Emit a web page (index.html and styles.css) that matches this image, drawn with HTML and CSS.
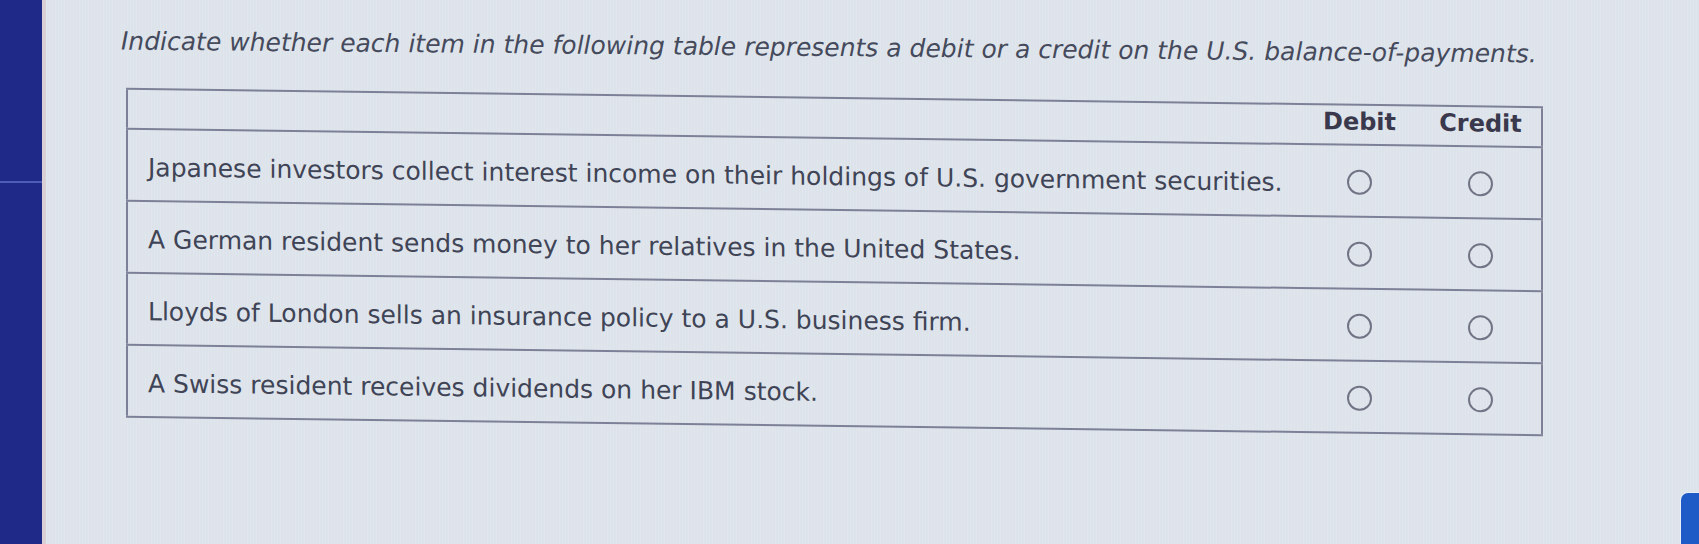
FILE: index.html
```html
<!DOCTYPE html>
<html lang="en">
<head>
<meta charset="utf-8">
<title>Balance of payments</title>
<link rel="stylesheet" href="styles.css">
</head>
<body>
<div class="page">
  <aside class="sidebar"><div class="sidebar-line"></div></aside>
  <main class="main">
    <p class="prompt">Indicate whether each item in the following table represents a debit or a credit on the U.S. balance-of-payments.</p>
    <table class="grid">
      <thead>
        <tr>
          <th class="item-head"></th>
          <th class="col-head">Debit</th>
          <th class="col-head">Credit</th>
        </tr>
      </thead>
      <tbody>
        <tr>
          <td class="item">Japanese investors collect interest income on their holdings of U.S. government securities.</td>
          <td class="choice"><span class="radio"></span></td>
          <td class="choice"><span class="radio"></span></td>
        </tr>
        <tr>
          <td class="item">A German resident sends money to her relatives in the United States.</td>
          <td class="choice"><span class="radio"></span></td>
          <td class="choice"><span class="radio"></span></td>
        </tr>
        <tr>
          <td class="item">Lloyds of London sells an insurance policy to a U.S. business firm.</td>
          <td class="choice"><span class="radio"></span></td>
          <td class="choice"><span class="radio"></span></td>
        </tr>
        <tr>
          <td class="item">A Swiss resident receives dividends on her IBM stock.</td>
          <td class="choice"><span class="radio"></span></td>
          <td class="choice"><span class="radio"></span></td>
        </tr>
      </tbody>
    </table>
    <div class="corner-button"></div>
  </main>
</div>
</body>
</html>
```
FILE: styles.css
```css
html, body {
  margin: 0;
  padding: 0;
  height: 100%;
}
body {
  font-family: "DejaVu Sans", Verdana, sans-serif;
  color: #3f4456;
  background: #dde3ea;
  overflow: hidden;
}
.page {
  display: flex;
  height: 544px;
}
.sidebar {
  width: 42px;
  flex: 0 0 42px;
  background: #1f2a88;
  border-right: 4px solid #d9d0d6;
}
.sidebar-line {
  margin-top: 181px;
  height: 2px;
  background: #4f5fb6;
}
.main {
  flex: 1;
  position: relative;
  background-color: #dde3ea;
  background-image: repeating-linear-gradient(90deg, rgba(255,255,255,0.12) 0 1px, rgba(0,0,0,0) 1px 3px);
  padding-top: 33px;
}
.prompt {
  width: max-content;
  margin: 0 0 0 75px;
  font-size: 25px;
  line-height: 30px;
  font-style: italic;
  color: #454a5c;
  white-space: nowrap;
  transform: skewY(0.52deg);
  transform-origin: 50% 50%;
}
.grid {
  margin: 34px 0 0 80px;
  width: 1417px;
  border-collapse: collapse;
  border: 2px solid #7c8197;
  transform: skewY(0.74deg);
  transform-origin: 50% 50%;
  font-size: 25px;
}
.grid th, .grid td {
  padding: 0;
  border-top: 2px solid #7c8197;
  border-bottom: 2px solid #7c8197;
}
.grid thead tr {
  height: 40px;
}
.grid .col-head {
  width: 121px;
  font-weight: bold;
  font-size: 24px;
  color: #3a384c;
  text-align: center;
  vertical-align: middle;
  padding-bottom: 6px;
}
.grid tbody tr {
  height: 72px;
}
.grid .item {
  text-align: left;
  padding-left: 20px;
  padding-top: 5px;
  vertical-align: middle;
  white-space: nowrap;
}
.grid .choice {
  text-align: center;
  vertical-align: middle;
}
.radio {
  display: inline-block;
  width: 21px;
  height: 21px;
  border: 2px solid #727486;
  border-radius: 50%;
  vertical-align: middle;
}
.corner-button {
  position: absolute;
  left: 1635px;
  top: 493px;
  width: 40px;
  height: 60px;
  background: #1f5bc6;
  border-radius: 7px 0 0 0;
  box-shadow: 0 0 0 1px #e8eef8;
}
```
